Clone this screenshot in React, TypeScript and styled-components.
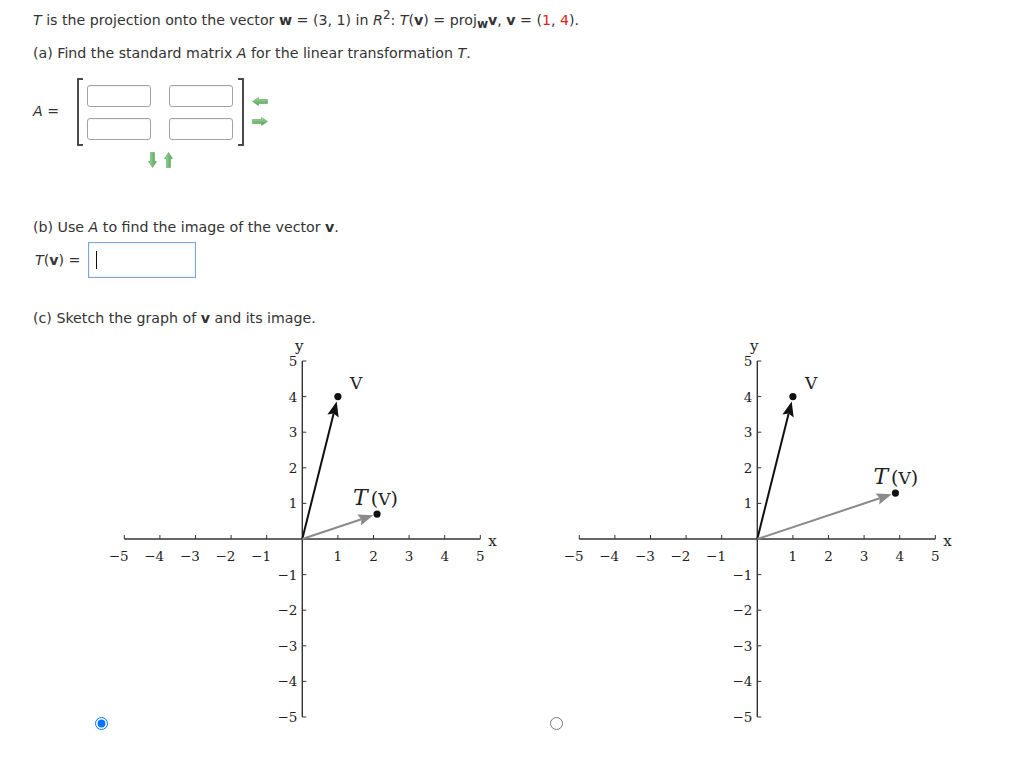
import React from 'react';
import styled, { createGlobalStyle } from 'styled-components';

// ===== グローバルスタイル =====
const GlobalStyle = createGlobalStyle`
  body {
    margin: 0;
    background: #fff;
    color: #333;
    font-family: "DejaVu Sans", Verdana, sans-serif;
    font-size: 14.2px;
  }
`;

// ===== レイアウト =====
const Page = styled.div`
  padding: 11px 0 40px 33px;
`;

const Line = styled.div<{ $top?: number }>`
  line-height: 18px;
  margin-top: ${(p) => p.$top ?? 0}px;
  white-space: nowrap;
`;

const Bold = styled.b`
  font-weight: 700;
`;

const Red = styled.span`
  color: #e0201b;
`;

const Sub = styled.sub`
  font-size: 12px;
  line-height: 0;
  vertical-align: -3px;
  font-weight: 700;
`;

const Sup = styled.sup`
  font-size: 12px;
  line-height: 0;
  vertical-align: 6px;
`;

// ===== 行列 =====
const MatrixArea = styled.div`
  display: flex;
  align-items: flex-start;
  margin-top: 16px;
`;

const MatrixLabel = styled.div`
  width: 44px;
  height: 66px;
  display: flex;
  align-items: center;
`;

const MatrixColumn = styled.div`
  display: flex;
  flex-direction: column;
  align-items: center;
`;

const Bracketed = styled.div`
  display: flex;
  height: 68px;
`;

const Bracket = styled.div<{ $side: 'left' | 'right' }>`
  width: 4px;
  border: 2px solid #4a4a4a;
  ${(p) => (p.$side === 'left' ? 'border-right: none;' : 'border-left: none;')}
`;

const Cells = styled.div`
  display: grid;
  grid-template-columns: 64px 64px;
  column-gap: 18px;
  row-gap: 11px;
  padding: 7px 5px 6px 4px;
`;

const Cell = styled.div`
  height: 20px;
  border: 1px solid #a2a2a2;
  border-radius: 3px;
  background: #fff;
  box-shadow: inset 0 1px 1px rgba(0, 0, 0, 0.05);
`;

const SideArrows = styled.div`
  display: flex;
  flex-direction: column;
  gap: 11px;
  margin: 19px 0 0 8px;
`;

const UpDownArrows = styled.div`
  display: flex;
  gap: 7px;
  margin-top: 6px;
`;

// ===== 入力欄 =====
const AnswerRow = styled.div`
  display: flex;
  align-items: center;
  margin-top: 6px;
`;

const AnswerLabel = styled.div`
  padding-left: 2px;
  margin-right: 8px;
`;

const AnswerBox = styled.div`
  width: 99px;
  height: 34px;
  border: 1px solid #7fa7d6;
  box-shadow: inset 0 0 2px rgba(80, 130, 200, 0.35);
  display: flex;
  align-items: center;
  padding-left: 7px;
  box-sizing: content-box;
`;

const Caret = styled.span`
  width: 1px;
  height: 18px;
  background: #111;
`;

// ===== グラフ =====
const GraphRow = styled.div`
  display: flex;
  gap: 42px;
  margin: 6px 0 0 62px;
`;

const GraphOption = styled.label`
  display: flex;
  align-items: flex-end;
`;

const Radio = styled.input`
  margin: 0 0 4px 0;
  width: 13px;
  height: 13px;
`;

// ===== 緑の矢印アイコン =====
const ARROW_PATHS = {
  right: 'M0.5 2.5 H9.5 V0.5 L15.5 4.5 L9.5 8.5 V6.5 H0.5 Z',
  left: 'M15.5 2.5 H6.5 V0.5 L0.5 4.5 L6.5 8.5 V6.5 H15.5 Z',
  down: 'M2.5 0.5 V9.5 H0.5 L4.5 15.5 L8.5 9.5 H6.5 V0.5 Z',
  up: 'M2.5 15.5 V6.5 H0.5 L4.5 0.5 L8.5 6.5 H6.5 V15.5 Z',
};

const GreenArrow: React.FC<{ dir: 'left' | 'right' | 'up' | 'down' }> = ({ dir }) => {
  const horizontal = dir === 'left' || dir === 'right';
  const id = `g-${dir}`;
  return (
    <svg width={horizontal ? 16 : 9} height={horizontal ? 9 : 16} viewBox={horizontal ? '0 0 16 9' : '0 0 9 16'}>
      <defs>
        <linearGradient id={id} x1="0" y1="0" x2={horizontal ? 0 : 1} y2={horizontal ? 1 : 0}>
          <stop offset="0" stopColor="#a6dca6" />
          <stop offset="1" stopColor="#4f9c4f" />
        </linearGradient>
      </defs>
      <path d={ARROW_PATHS[dir]} fill={`url(#${id})`} stroke="#5fa65f" strokeWidth="0.6" />
    </svg>
  );
};

const UNIT = 35.6;
const OX = 194.3;
const OY = 206;
const TICKS = [-5, -4, -3, -2, -1, 1, 2, 3, 4, 5];

// 原点から点までの矢印（軸と矢じり）のパス
const arrowPath = (x2: number, y2: number, gap: number) => {
  const dx = x2 - OX;
  const dy = y2 - OY;
  const L = Math.hypot(dx, dy);
  const ux = dx / L;
  const uy = dy / L;
  const tx = x2 - ux * gap;
  const ty = y2 - uy * gap;
  const len = 15;
  const hw = 5.8;
  const bx = tx - ux * len;
  const by = ty - uy * len;
  const nx = tx - ux * (len - 2.5);
  const ny = ty - uy * (len - 2.5);
  return {
    shaft: `M${OX} ${OY} L${nx} ${ny}`,
    head: `M${tx} ${ty} L${bx - uy * hw} ${by + ux * hw} L${nx} ${ny} L${bx + uy * hw} ${by - ux * hw} Z`,
  };
};

interface GraphProps {
  tx: number;
  ty: number;
  tlx: number;
  tly: number;
}

const Graph: React.FC<GraphProps> = ({ tx, ty, tlx, tly }) => {
  const vX = OX + 1 * UNIT;
  const vY = OY - 4 * UNIT;
  const tX = OX + tx * UNIT;
  const tY = OY - ty * UNIT;
  const v = arrowPath(vX, vY, 5);
  const t = arrowPath(tX, tY, 4);
  const axis = '#333';
  const num = { fontFamily: '"DejaVu Serif", serif', fontSize: 13.5, fill: '#222' };
  return (
    <svg width="400" height="401" viewBox="0 0 400 401">
      {/* 軸 */}
      <line x1={OX - 5 * UNIT} y1={OY} x2={OX + 5 * UNIT} y2={OY} stroke={axis} strokeWidth="1.4" />
      <line x1={OX} y1={OY - 5 * UNIT} x2={OX} y2={OY + 5 * UNIT} stroke={axis} strokeWidth="1.4" />
      {TICKS.map((i) => (
        <g key={i}>
          <line x1={OX + i * UNIT} y1={OY} x2={OX + i * UNIT} y2={OY - 4} stroke={axis} strokeWidth="1" />
          <line x1={OX} y1={OY - i * UNIT} x2={OX + 4} y2={OY - i * UNIT} stroke={axis} strokeWidth="1" />
          <text
            {...num}
            x={i < 0 ? OX + i * UNIT + 4.3 : OX + i * UNIT}
            y={OY + 21.5}
            textAnchor={i < 0 ? 'end' : 'middle'}
          >
            {i < 0 ? `−${-i}` : i}
          </text>
          <text {...num} x={OX - 5} y={OY - i * UNIT + 5} textAnchor="end">
            {i < 0 ? `−${-i}` : i}
          </text>
        </g>
      ))}
      <text {...num} fontSize={15} x={OX + 5 * UNIT + 8} y={OY + 7}>x</text>
      <text {...num} fontSize={15} x={OX - 3} y={18} textAnchor="middle">y</text>

      {/* ベクトル v */}
      <path d={v.shaft} stroke="#111" strokeWidth="2" fill="none" />
      <path d={v.head} fill="#111" />
      <circle cx={vX} cy={vY} r="3.6" fill="#111" />
      <text x={vX + 12} y={vY - 8} fontFamily='"DejaVu Serif", serif' fontSize="17" fill="#222">V</text>

      {/* ベクトル T(v) */}
      <path d={t.shaft} stroke="#8a8a8a" strokeWidth="2" fill="none" />
      <path d={t.head} fill="#8a8a8a" />
      <circle cx={tX} cy={tY} r="3.6" fill="#111" />
      <text x={tX + tlx} y={tY + tly} fontFamily='"DejaVu Serif", serif' fill="#222">
        <tspan fontStyle="italic" fontSize="22">T</tspan>
        <tspan fontSize="19" dx="3">(</tspan>
        <tspan fontSize="17">V</tspan>
        <tspan fontSize="19">)</tspan>
      </text>
    </svg>
  );
};

export default function App() {
  return (
    <>
      <GlobalStyle />
      <Page>
        <Line>
          <i>T</i> is the projection onto the vector <Bold>w</Bold> = (3, 1) in <i>R</i>
          <Sup>2</Sup>: <i>T</i>(<Bold>v</Bold>) = proj<Sub>w</Sub>
          <Bold>v</Bold>, <Bold>v</Bold> = (<Red>1</Red>, <Red>4</Red>).
        </Line>
        <Line $top={15}>
          (a) Find the standard matrix <i>A</i> for the linear transformation <i>T</i>.
        </Line>

        <MatrixArea>
          <MatrixLabel>
            <span>
              <i>A</i> =
            </span>
          </MatrixLabel>
          <MatrixColumn>
            <Bracketed>
              <Bracket $side="left" />
              <Cells>
                <Cell />
                <Cell />
                <Cell />
                <Cell />
              </Cells>
              <Bracket $side="right" />
            </Bracketed>
            <UpDownArrows>
              <GreenArrow dir="down" />
              <GreenArrow dir="up" />
            </UpDownArrows>
          </MatrixColumn>
          <SideArrows>
            <GreenArrow dir="left" />
            <GreenArrow dir="right" />
          </SideArrows>
        </MatrixArea>

        <Line $top={50}>
          (b) Use <i>A</i> to find the image of the vector <Bold>v</Bold>.
        </Line>
        <AnswerRow>
          <AnswerLabel>
            <i>T</i>(<Bold>v</Bold>) =
          </AnswerLabel>
          <AnswerBox>
            <Caret />
          </AnswerBox>
        </AnswerRow>

        <Line $top={31}>
          (c) Sketch the graph of <Bold>v</Bold> and its image.
        </Line>

        <GraphRow>
          <GraphOption>
            <Radio type="radio" name="graph" defaultChecked />
            <Graph tx={2.1} ty={0.7} tlx={-24} tly={-9} />
          </GraphOption>
          <GraphOption>
            <Radio type="radio" name="graph" />
            <Graph tx={3.88} ty={1.29} tlx={-22} tly={-9} />
          </GraphOption>
        </GraphRow>
      </Page>
    </>
  );
}
